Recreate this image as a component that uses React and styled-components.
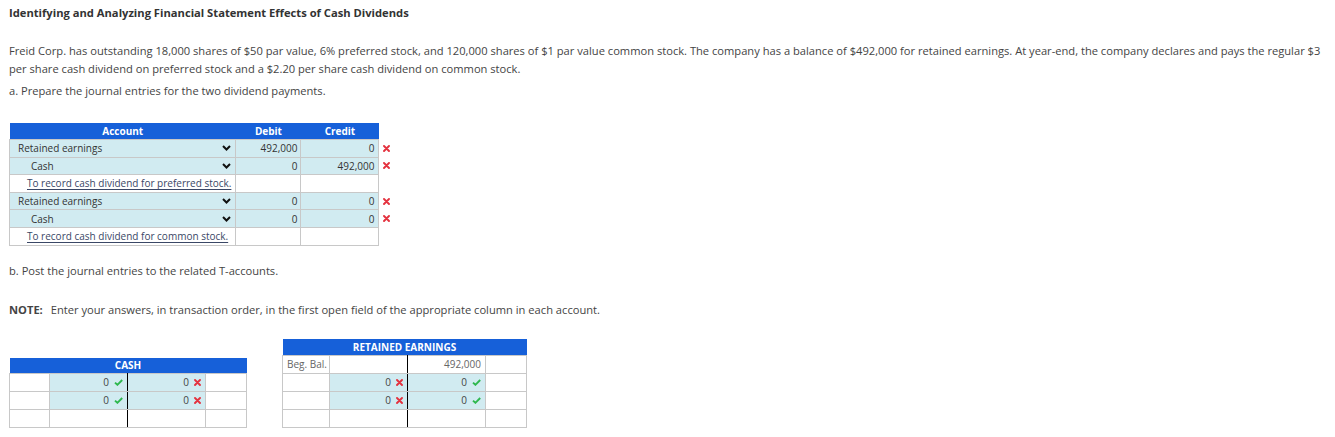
import styled, { createGlobalStyle } from 'styled-components';

const GlobalStyle = createGlobalStyle`
  body {
    margin: 0;
    background: #fff;
    font-family: "Open Sans", "Liberation Sans", sans-serif;
    color: #333;
  }
`;

const BLUE = '#1660d9';
const CELL = '#d1ebf1';
const LINE = '#c8c8c8';

const Page = styled.div`
  padding: 0 9px;
  width: 1335px;
  box-sizing: border-box;
`;

const Title = styled.h1`
  margin: 5px 0 0;
  font-size: 11.2px;
  line-height: 16px;
  font-weight: 700;
  color: #333;
`;

const Para = styled.p`
  margin: ${(p) => p.$top}px 0 0;
  font-size: 11.15px;
  line-height: 18px;
  color: #444;
`;

const Note = styled(Para)`
  b {
    font-weight: 700;
    margin-right: 5px;
  }
`;

const Journal = styled.table`
  margin-top: 23px;
  border-collapse: collapse;
  font-size: 10px;
  color: #333;

  th {
    background: ${BLUE};
    color: #fff;
    font-weight: 700;
    height: 16px;
    padding: 0;
    text-align: center;
  }
  td {
    height: 17.6px;
    padding: 0;
    border: 1px solid ${LINE};
    box-sizing: border-box;
  }
`;

const AccCell = styled.td`
  width: 223px;
  background: ${(p) => (p.$link ? '#fff' : CELL)};
`;

const AccInner = styled.div`
  display: flex;
  align-items: center;
  justify-content: space-between;
  padding: 0 4px 0 ${(p) => p.$indent}px;
  white-space: nowrap;
`;

const NumCell = styled.td`
  width: ${(p) => p.$w}px;
  text-align: right;
  background: ${(p) => (p.$blank ? '#fff' : CELL)};
  && {
    padding-right: ${(p) => p.$pr}px;
  }
`;

const MarkCell = styled.td`
  && {
    border: none;
    padding-left: 4px;
    width: 14px;
  }
`;

const Link = styled.a`
  color: #3a4766;
  text-decoration: underline;
  text-underline-offset: 2px;
`;

const Accounts = styled.div`
  margin-top: 20px;
  display: flex;
  align-items: flex-end;
  gap: 35px;
`;

const TTable = styled.table`
  border-collapse: collapse;
  font-size: 10px;
  color: #444;
  table-layout: fixed;

  th {
    background: ${BLUE};
    color: #fff;
    font-weight: 700;
    height: ${(p) => p.$head}px;
    padding: 0;
    text-align: center;
  }
  td {
    height: 18px;
    padding: 0;
    border: 1px solid ${LINE};
    box-sizing: border-box;
  }
`;

const TCell = styled.td`
  background: ${(p) => (p.$fill ? CELL : '#fff')};
  text-align: ${(p) => (p.$left ? 'left' : 'right')};
  && {
    padding: 0 ${(p) => (p.$left ? 0 : 4)}px 0 ${(p) => (p.$left ? 4 : 0)}px;
    ${(p) => p.$divide && 'border-right: 1px solid #000;'}
  }
  color: ${(p) => (p.$muted ? '#666' : '#444')};
  white-space: nowrap;
`;

const Val = styled.span`
  display: inline-flex;
  align-items: center;
  gap: 5px;
`;

const Chevron = () => (
  <svg width="9" height="6" viewBox="0 0 9 6">
    <path d="M1 1 L4.5 4.5 L8 1" fill="none" stroke="#111" strokeWidth="2" />
  </svg>
);

const Cross = () => (
  <svg width="7" height="7" viewBox="0 0 7 7" style={{ display: 'block' }}>
    <path d="M1 1 L6 6 M6 1 L1 6" stroke="#e4323f" strokeWidth="1.9" strokeLinecap="round" />
  </svg>
);

const Check = () => (
  <svg width="9" height="7" viewBox="0 0 9 7" style={{ display: 'block' }}>
    <path d="M1 3.6 L3.4 5.8 L8.2 1" fill="none" stroke="#2fb84f" strokeWidth="1.9" />
  </svg>
);

const entries = [
  { acc: 'Retained earnings', indent: 8, debit: '492,000', credit: '0' },
  { acc: 'Cash', indent: 21, debit: '0', credit: '492,000' },
  { link: 'To record cash dividend for preferred stock.' },
  { acc: 'Retained earnings', indent: 8, debit: '0', credit: '0' },
  { acc: 'Cash', indent: 21, debit: '0', credit: '0' },
  { link: 'To record cash dividend for common stock.' },
];

function Mark({ ok }) {
  return ok ? <Check /> : <Cross />;
}

function Value({ v, ok }) {
  return (
    <Val>
      {v}
      <Mark ok={ok} />
    </Val>
  );
}

export default function App() {
  return (
    <Page>
      <GlobalStyle />
      <Title>Identifying and Analyzing Financial Statement Effects of Cash Dividends</Title>
      <Para $top={21}>
        Freid Corp. has outstanding 18,000 shares of $50 par value, 6% preferred stock, and 120,000 shares of $1 par value
        common stock. The company has a balance of $492,000 for retained earnings. At year-end, the company declares and pays
        the regular $3 per share cash dividend on preferred stock and a $2.20 per share cash dividend on common stock.
      </Para>
      <Para $top={4}>a. Prepare the journal entries for the two dividend payments.</Para>

      <Journal>
        <thead>
          <tr>
            <th>Account</th>
            <th>Debit</th>
            <th>Credit</th>
            <th style={{ background: 'none' }} />
          </tr>
        </thead>
        <tbody>
          {entries.map((e, i) =>
            e.link ? (
              <tr key={i}>
                <AccCell $link>
                  <AccInner $indent={17}>
                    <Link>{e.link}</Link>
                  </AccInner>
                </AccCell>
                <NumCell $w={65} $pr={3} $blank />
                <NumCell $w={78} $pr={4} $blank />
                <MarkCell />
              </tr>
            ) : (
              <tr key={i}>
                <AccCell>
                  <AccInner $indent={e.indent}>
                    <span>{e.acc}</span>
                    <Chevron />
                  </AccInner>
                </AccCell>
                <NumCell $w={65} $pr={3}>{e.debit}</NumCell>
                <NumCell $w={78} $pr={4}>{e.credit}</NumCell>
                <MarkCell>
                  <Cross />
                </MarkCell>
              </tr>
            )
          )}
        </tbody>
      </Journal>

      <Para $top={16}>b. Post the journal entries to the related T-accounts.</Para>
      <Note $top={21}>
        <b>NOTE:</b> Enter your answers, in transaction order, in the first open field of the appropriate column in each
        account.
      </Note>

      <Accounts>
        <TTable $head={15}>
          <colgroup>
            <col style={{ width: 40 }} />
            <col style={{ width: 78 }} />
            <col style={{ width: 78 }} />
            <col style={{ width: 41 }} />
          </colgroup>
          <thead>
            <tr>
              <th colSpan={4}>CASH</th>
            </tr>
          </thead>
          <tbody>
            {[0, 1].map((r) => (
              <tr key={r}>
                <TCell />
                <TCell $fill $divide>
                  <Value v="0" ok />
                </TCell>
                <TCell $fill>
                  <Value v="0" />
                </TCell>
                <TCell />
              </tr>
            ))}
            <tr>
              <TCell />
              <TCell $divide />
              <TCell />
              <TCell />
            </tr>
          </tbody>
        </TTable>

        <TTable $head={16}>
          <colgroup>
            <col style={{ width: 47 }} />
            <col style={{ width: 78 }} />
            <col style={{ width: 78 }} />
            <col style={{ width: 41 }} />
          </colgroup>
          <thead>
            <tr>
              <th colSpan={4}>RETAINED EARNINGS</th>
            </tr>
          </thead>
          <tbody>
            <tr>
              <TCell $left $muted>Beg. Bal.</TCell>
              <TCell $divide />
              <TCell $muted>492,000</TCell>
              <TCell />
            </tr>
            {[0, 1].map((r) => (
              <tr key={r}>
                <TCell />
                <TCell $fill $divide>
                  <Value v="0" />
                </TCell>
                <TCell $fill>
                  <Value v="0" ok />
                </TCell>
                <TCell />
              </tr>
            ))}
            <tr>
              <TCell />
              <TCell $divide />
              <TCell />
              <TCell />
            </tr>
          </tbody>
        </TTable>
      </Accounts>
    </Page>
  );
}
